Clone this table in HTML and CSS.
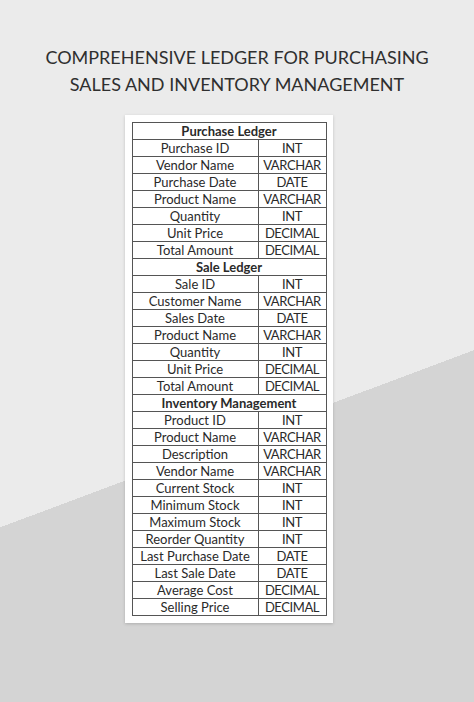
FILE: index.html
```html
<!DOCTYPE html>
<html>
<head>
<meta charset="utf-8">
<link rel="stylesheet" href="styles.css">
</head>
<body>
<main class="page">
  <h1 class="title">COMPREHENSIVE LEDGER FOR PURCHASING<br>SALES AND INVENTORY MANAGEMENT</h1>
  <section class="card">
    <table class="ledger">
      <colgroup><col class="col-name"><col class="col-type"></colgroup>
      <tbody>
        <tr><th colspan="2">Purchase Ledger</th></tr>
        <tr><td>Purchase ID</td><td>INT</td></tr>
        <tr><td>Vendor Name</td><td>VARCHAR</td></tr>
        <tr><td>Purchase Date</td><td>DATE</td></tr>
        <tr><td>Product Name</td><td>VARCHAR</td></tr>
        <tr><td>Quantity</td><td>INT</td></tr>
        <tr><td>Unit Price</td><td>DECIMAL</td></tr>
        <tr><td>Total Amount</td><td>DECIMAL</td></tr>
        <tr><th colspan="2">Sale Ledger</th></tr>
        <tr><td>Sale ID</td><td>INT</td></tr>
        <tr><td>Customer Name</td><td>VARCHAR</td></tr>
        <tr><td>Sales Date</td><td>DATE</td></tr>
        <tr><td>Product Name</td><td>VARCHAR</td></tr>
        <tr><td>Quantity</td><td>INT</td></tr>
        <tr><td>Unit Price</td><td>DECIMAL</td></tr>
        <tr><td>Total Amount</td><td>DECIMAL</td></tr>
        <tr><th colspan="2">Inventory Management</th></tr>
        <tr><td>Product ID</td><td>INT</td></tr>
        <tr><td>Product Name</td><td>VARCHAR</td></tr>
        <tr><td>Description</td><td>VARCHAR</td></tr>
        <tr><td>Vendor Name</td><td>VARCHAR</td></tr>
        <tr><td>Current Stock</td><td>INT</td></tr>
        <tr><td>Minimum Stock</td><td>INT</td></tr>
        <tr><td>Maximum Stock</td><td>INT</td></tr>
        <tr><td>Reorder Quantity</td><td>INT</td></tr>
        <tr><td>Last Purchase Date</td><td>DATE</td></tr>
        <tr><td>Last Sale Date</td><td>DATE</td></tr>
        <tr><td>Average Cost</td><td>DECIMAL</td></tr>
        <tr><td>Selling Price</td><td>DECIMAL</td></tr>
      </tbody>
    </table>
  </section>
</main>
</body>
</html>
```

FILE: styles.css
```css
html, body {
  margin: 0;
  padding: 0;
}
body {
  width: 474px;
  height: 702px;
  overflow: hidden;
  background: linear-gradient(159.5deg, #ebebeb 0, #ebebeb 494px, #d4d4d4 494px, #d4d4d4 100%);
  font-family: "Lato", "Liberation Sans", sans-serif;
  color: #333;
}
.page {
  display: flex;
  flex-direction: column;
  align-items: center;
  padding-top: 44px;
}
.title {
  margin: 0;
  font-family: "Lato", sans-serif;
  font-weight: 400;
  font-size: 18px;
  line-height: 27px;
  text-align: center;
  color: #2f2f2f;
}
.card {
  margin-top: 17px;
  margin-right: 17px;
  width: 194px;
  padding: 7px;
  background: #fff;
  box-shadow: 0 1px 3px rgba(0, 0, 0, 0.18);
}
.ledger {
  width: 194px;
  border-collapse: collapse;
  table-layout: fixed;
  font-size: 13px;
  color: #2a2a2a;
}
.col-name {
  width: 126px;
}
.col-type {
  width: 68px;
}
.ledger th, .ledger td {
  border: 1px solid #555;
  height: 16px;
  padding: 0;
  line-height: 16px;
  text-align: center;
  white-space: nowrap;
}
.ledger td + td {
  letter-spacing: -0.4px;
}
.ledger th {
  font-weight: 700;
}
```
